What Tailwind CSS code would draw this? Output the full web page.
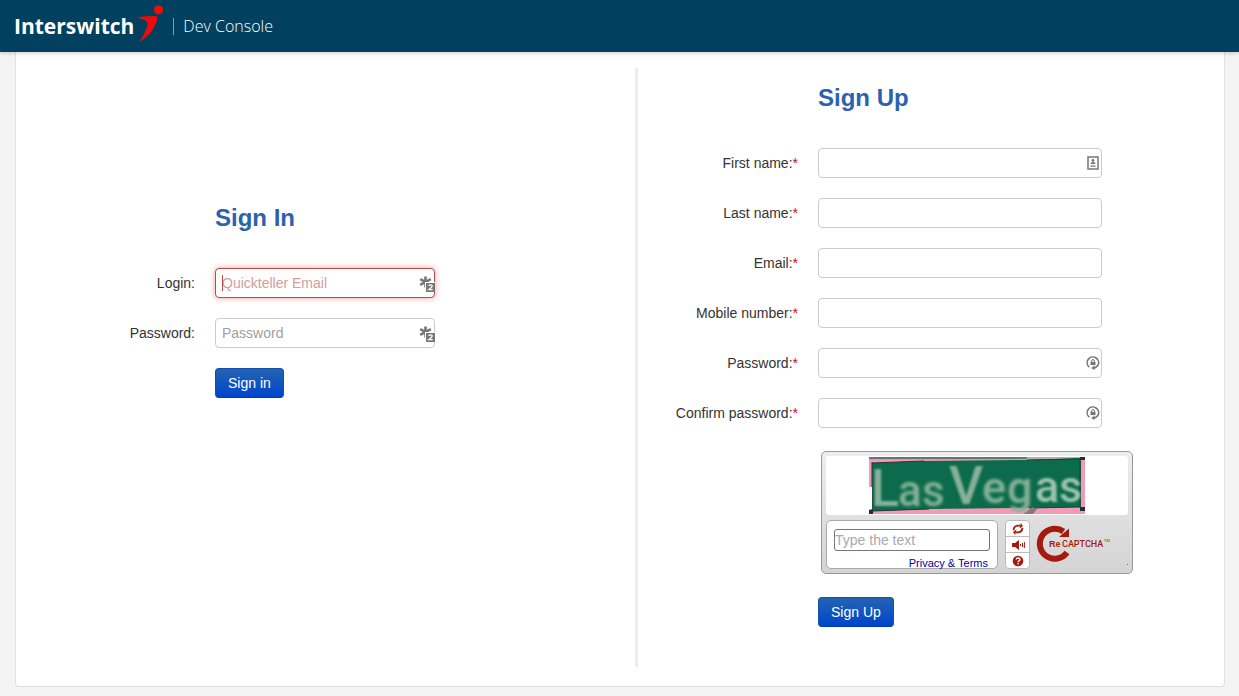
<!DOCTYPE html>
<html lang="en">
<head>
<meta charset="utf-8">
<meta name="viewport" content="width=device-width, initial-scale=1">
<title>Interswitch Dev Console</title>
<script src="https://cdn.jsdelivr.net/npm/@tailwindcss/browser@4"></script>
</head>
<body class="bg-[#f4f4f4] font-['Liberation_Sans',Arial,sans-serif] text-sm text-[#333]">

<svg class="hidden" aria-hidden="true">
  <symbol id="asterisk-badge" viewBox="0 0 16 16">
    <path d="M6.500 .5v11M1.200 3.200l10.600 5.600M1.200 8.800l10.600-5.600" stroke="#777" stroke-width="2.600" fill="none"/>
    <rect x="6" y="6" width="10" height="10" fill="#fff"/>
    <rect x="7" y="7" width="9" height="9" fill="#777"/>
    <path d="M9.500 9.800q2-1.600 3.400-.6t-3.200 4.500h4" stroke="#fff" stroke-width="1.300" fill="none"/>
  </symbol>
  <symbol id="lock-cycle" viewBox="0 0 14 14">
    <path d="M3.400 11.200A5.700 5.700 0 1 1 12 9.200Q10.600 11.800 7.500 11.900" stroke="#777" stroke-width="1.600" fill="none"/>
    <path d="M8.600 9.700V14L5 11.900z" fill="#777"/>
    <rect x="4.500" y="5.900" width="5" height="3.200" fill="#777"/>
    <path d="M5.600 6V5a1.400 1.400 0 0 1 2.800 0v1" stroke="#777" fill="none"/>
  </symbol>
</svg>

<header class="relative flex h-[52px] items-center bg-[#01415f] pl-3.5 text-white shadow-[0_1px_4px_rgba(0,0,0,0.2)]">
  <a href="#" class="flex h-full items-center">
    <span class="font-['Open_Sans','Noto_Sans',sans-serif] text-[21px] leading-[52px] font-bold">Interswitch</span>
    <svg class="ml-[3px] h-[42px] w-7" viewBox="0 0 28 42" aria-hidden="true">
      <circle cx="21.500" cy="4.800" r="4.600" fill="#f00b0b"/>
      <path d="M0 12.200Q9 11 18.500 11Q21.200 11.400 20.200 14.500Q18.600 20.500 14.500 26.500Q9.500 33 2.200 37.200Q8 28.500 10.500 20.500Q11.400 16.800 8 15.200Q4.500 14.200 0 12.200z" fill="#f00b0b"/>
    </svg>
  </a>
  <span class="ml-2 h-[17px] w-px bg-[#7c9fb0]"></span>
  <span class="ml-[9px] font-['Open_Sans','Noto_Sans',sans-serif] text-[16px] font-light">Dev Console</span>
</header>

<main class="mr-3.5 mb-[9px] ml-[15px] flex rounded-b-[4px] border border-t-0 border-[#e0e0e0] bg-white pt-4 pb-[19px]">
  <section class="flex-1 pt-[130px] pl-[19px]">
    <form>
      <h2 class="mb-[30px] pl-[180px] text-[24px] leading-10 font-bold text-[#2b62ab]">Sign In</h2>
      <div class="mb-5 flex items-center">
        <label for="login" class="w-[180px] pr-5 text-right">Login:</label>
        <div class="relative w-[220px]">
          <input id="login" type="text" placeholder="Quickteller Email" class="block h-[30px] w-full rounded-[4px] border border-[#b94a48] bg-white px-1.5 text-sm text-[#b94a48] shadow-[0_0_6px_#f0a0a0] outline-none placeholder:text-[#d59c9c]">
          <span class="absolute top-[7px] left-[7px] h-4 w-px bg-[#b94a48]"></span>
          <svg class="absolute top-2 right-0 size-4" aria-hidden="true"><use href="#asterisk-badge"/></svg>
        </div>
      </div>
      <div class="mb-5 flex items-center">
        <label for="password" class="w-[180px] pr-5 text-right">Password:</label>
        <div class="relative w-[220px]">
          <input id="password" type="password" placeholder="Password" class="block h-[30px] w-full rounded-[4px] border border-[#ccc] bg-white px-1.5 text-sm outline-none placeholder:text-[#a0a0a0]">
          <svg class="absolute top-2 right-0 size-4" aria-hidden="true"><use href="#asterisk-badge"/></svg>
        </div>
      </div>
      <button type="button" class="ml-[180px] h-[30px] rounded-[4px] border border-[#1450a8] border-b-[#003bb0] bg-linear-to-b from-[#2462b3] to-[#0044cc] px-3 text-white">Sign in</button>
    </form>
  </section>

  <div class="w-[3px] bg-[#ececec]"></div>

  <section class="w-[586px] pt-2.5 pb-10">
    <form>
      <h2 class="mb-[30px] pl-[180px] text-[24px] leading-10 font-bold text-[#2b62ab]">Sign Up</h2>
      <div class="mb-5 flex items-center">
        <label for="first" class="w-[180px] pr-5 text-right">First name:<span class="text-[#c8102e]">*</span></label>
        <div class="relative w-[284px]">
          <input id="first" type="text" class="block h-[30px] w-full rounded-[4px] border border-[#ccc] bg-white px-1.5">
          <svg class="absolute top-2 right-[3px] h-[14px] w-3" viewBox="0 0 12 14" aria-hidden="true">
            <rect x="1" y="1" width="10" height="12" fill="#fff" stroke="#777" stroke-width="1.500"/>
            <circle cx="6" cy="4.500" r="1.400" fill="#777"/><path d="M3.500 8q0-2 2.500-2t2.500 2zM3.500 9.500h5v1.200h-5z" fill="#777"/>
          </svg>
        </div>
      </div>
      <div class="mb-5 flex items-center">
        <label for="last" class="w-[180px] pr-5 text-right">Last name:<span class="text-[#c8102e]">*</span></label>
        <input id="last" type="text" class="block h-[30px] w-[284px] rounded-[4px] border border-[#ccc] bg-white px-1.5">
      </div>
      <div class="mb-5 flex items-center">
        <label for="email" class="w-[180px] pr-5 text-right">Email:<span class="text-[#c8102e]">*</span></label>
        <input id="email" type="email" class="block h-[30px] w-[284px] rounded-[4px] border border-[#ccc] bg-white px-1.5">
      </div>
      <div class="mb-5 flex items-center">
        <label for="mobile" class="w-[180px] pr-5 text-right">Mobile number:<span class="text-[#c8102e]">*</span></label>
        <input id="mobile" type="tel" class="block h-[30px] w-[284px] rounded-[4px] border border-[#ccc] bg-white px-1.5">
      </div>
      <div class="mb-5 flex items-center">
        <label for="new-password" class="w-[180px] pr-5 text-right">Password:<span class="text-[#c8102e]">*</span></label>
        <div class="relative w-[284px]">
          <input id="new-password" type="password" class="block h-[30px] w-full rounded-[4px] border border-[#ccc] bg-white px-1.5">
          <svg class="absolute top-2 right-0.5 size-3.5" aria-hidden="true"><use href="#lock-cycle"/></svg>
        </div>
      </div>
      <div class="flex items-center">
        <label for="confirm" class="w-[180px] pr-5 text-right">Confirm password:<span class="text-[#c8102e]">*</span></label>
        <div class="relative w-[284px]">
          <input id="confirm" type="password" class="block h-[30px] w-full rounded-[4px] border border-[#ccc] bg-white px-1.5">
          <svg class="absolute top-2 right-0.5 size-3.5" aria-hidden="true"><use href="#lock-cycle"/></svg>
        </div>
      </div>

      <div class="my-[23px] ml-[183px] w-[312px] rounded-[5px] border border-[#999] bg-linear-to-b from-[#ededed] to-[#d4d4d4] p-1">
        <div class="flex h-[59px] items-center justify-center rounded-[3px] bg-white">
          <svg class="h-[57px] w-[216px] overflow-visible" viewBox="0 0 216 57" role="img" aria-label="Street sign">
            <defs><filter id="soft"><feGaussianBlur stdDeviation="1"/></filter><filter id="softer"><feGaussianBlur stdDeviation="1.800"/></filter></defs>
            <rect width="216" height="57" fill="#f19bb5"/>
            <path d="M0 0h216v3H0z" fill="#bda8b8"/>
            <path d="M0 0h158v2H0z" fill="#667477"/>
            <path d="M3 6L55 4L158 3L212 1V50L160 51L60 52L3 54z" fill="#0b6b4c"/>
            <path d="M3 6L55 4M158 3L211 2V50L160 51M60 52L3 54M3 5V54" stroke="#29363b" fill="none"/>
            <path d="M0 30h3v22H0z" fill="#fff"/>
            <path d="M0 53h4v4H0zM211 0h5v3h-5zM211 50h5v4h-5z" fill="#242d33"/>
            <path d="M154 57L164 50L168 52L164 57z" fill="#8d7482"/>
            <g font-family="Roboto, 'Liberation Sans', sans-serif" font-weight="500" fill="#86b198">
              <text x="2" y="49" font-size="52" filter="url(#soft)">L</text>
              <text x="29 53" y="49" font-size="44" filter="url(#softer)">as</text>
              <text x="80" y="47" font-size="53" filter="url(#soft)">V</text>
              <text x="113 138" y="46" font-size="45" filter="url(#softer)">eg</text>
              <text x="166 190" y="45" font-size="45" filter="url(#soft)" fill="#9cc2ac">as</text>
            </g>
          </svg>
        </div>
        <div class="mt-[5px] flex items-start">
          <div class="h-[49px] w-[172px] rounded-[5px] border border-[#aaa] bg-white px-[7px] pt-2">
            <input type="text" aria-label="Type the text" placeholder="Type the text" class="block h-[22px] w-full rounded-[3px] border border-[#777] bg-white text-sm placeholder:text-[#aaa]">
            <a href="#" class="mt-1.5 mr-0.5 block text-right text-[11px] leading-3 text-[#0000a8]">Privacy &amp; Terms</a>
          </div>
          <div class="ml-[7px] flex h-[49px] w-[25px] flex-col divide-y divide-[#bbb] rounded-[4px] border border-[#bbb] bg-white">
            <button type="button" aria-label="Get a new challenge" class="flex flex-1 items-center justify-center">
              <svg class="size-3" viewBox="0 0 12 12" aria-hidden="true"><path d="M1.600 7.200Q1.600 3 6 2.600H8M10.400 4.800Q10.400 9 6 9.400H4" stroke="#a41a0c" stroke-width="1.900" fill="none"/><path d="M7.500 5.600L11 3 8.800 0zM4.500 6.400L1 9l2.200 3z" fill="#a41a0c"/></svg>
            </button>
            <button type="button" aria-label="Get an audio challenge" class="flex flex-1 items-center justify-center">
              <svg class="h-3 w-3.5" viewBox="0 0 14 12" aria-hidden="true"><path d="M1 4h3L8 1v10L4 8H1z" fill="#a41a0c"/><path d="M9.500 5v2M11.500 4v4M13.400 3v6" stroke="#a41a0c"/></svg>
            </button>
            <button type="button" aria-label="Help" class="flex flex-1 items-center justify-center">
              <svg class="size-3" viewBox="0 0 12 12" aria-hidden="true"><circle cx="6" cy="6" r="5.300" fill="#a41a0c"/><path d="M4.200 4.600q0-1.600 1.900-1.600t1.900 1.400q0 .9-1 1.400t-.9 1.400" stroke="#fff" stroke-width="1.300" fill="none"/><rect x="5.400" y="8" width="1.400" height="1.400" fill="#fff"/></svg>
            </button>
          </div>
          <svg class="mt-1 ml-1.5 h-10 w-[76px]" viewBox="0 0 76 40" role="img" aria-label="reCAPTCHA">
            <path d="M31 28.500A15 15 0 1 1 27.500 7.500" stroke="#a41a0c" stroke-width="6" fill="none"/>
            <path d="M33 4.500V13H23z" fill="#a41a0c"/>
            <text x="13" y="23" font-family="'Liberation Sans', sans-serif" font-size="9" font-weight="700" fill="#a41a0c">Re</text>
            <text x="26" y="23" font-family="Roboto, 'Liberation Sans', sans-serif" font-size="9" font-weight="500" fill="#a41a0c">CAPTCHA</text>
            <text x="68" y="18" font-family="'Liberation Sans', sans-serif" font-size="4" fill="#a41a0c">TM</text>
          </svg>
          <span class="mt-11 ml-auto size-px bg-[#666]"></span>
        </div>
      </div>

      <button type="button" class="ml-[180px] h-[30px] rounded-[4px] border border-[#1450a8] border-b-[#003bb0] bg-linear-to-b from-[#2462b3] to-[#0044cc] px-3 text-white">Sign Up</button>
    </form>
  </section>
</main>
</body>
</html>
